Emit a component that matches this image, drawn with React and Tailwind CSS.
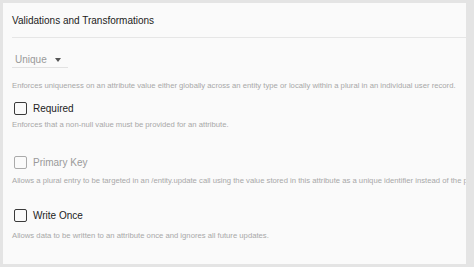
export default function App() {
    const font = { fontFamily: '"Liberation Sans", Arial, sans-serif' };
    return (
        <div className="w-[474px] h-[267px] bg-[#e4e4e4] pt-[3px] pl-[3px] pr-[8px] pb-[3px] overflow-hidden" style={font}>
            <div className="h-full bg-[#fafafa] overflow-hidden">
                {/* Header */}
                <div className="h-[35px] flex items-center ml-[9px] border-b border-[#e6e6e6]">
                    <span className="text-[10px] text-[#222]">Validations and Transformations</span>
                </div>

                <div className="pl-[9px]">
                    {/* Unique dropdown */}
                    <div className="mt-[14px] w-[56px] h-[16px] border-b border-[#e2e2e2] flex items-center pl-[3px] gap-[8px]">
                        <span className="text-[10px] text-[#999]">Unique</span>
                        <span className="w-0 h-0 border-l-[3px] border-r-[3px] border-t-[4px] border-l-transparent border-r-transparent border-t-[#555]" />
                    </div>
                    <p className="mt-[13px] text-[7.7px] leading-[9px] text-[#a8a8a8] whitespace-nowrap">
                        Enforces uniqueness on an attribute value either globally across an entity type or locally within a plural in an individual user record.
                    </p>

                    {/* Required */}
                    <div className="mt-[11px] flex items-center gap-[6px] pl-[2px]">
                        <span className="w-[13px] h-[13px] border-[1.5px] border-[#3a3a3a] rounded-[2px]" />
                        <span className="text-[10px] text-[#222]">Required</span>
                    </div>
                    <p className="mt-[4px] text-[7.7px] leading-[9px] text-[#a8a8a8] whitespace-nowrap">
                        Enforces that a non-null value must be provided for an attribute.
                    </p>

                    {/* Primary Key */}
                    <div className="mt-[26px] flex items-center gap-[6px] pl-[2px]">
                        <span className="w-[13px] h-[13px] border-[1.5px] border-[#aaa] rounded-[2px]" />
                        <span className="text-[10px] text-[#999]">Primary Key</span>
                    </div>
                    <p className="mt-[6px] text-[7.7px] leading-[9px] text-[#a8a8a8] whitespace-nowrap">
                        Allows a plural entry to be targeted in an /entity.update call using the value stored in this attribute as a unique identifier instead of the plural element id.
                    </p>

                    {/* Write Once */}
                    <div className="mt-[23px] flex items-center gap-[6px] pl-[2px]">
                        <span className="w-[13px] h-[13px] border-[1.5px] border-[#3a3a3a] rounded-[2px]" />
                        <span className="text-[10px] text-[#222]">Write Once</span>
                    </div>
                    <p className="mt-[8px] text-[7.7px] leading-[9px] text-[#a8a8a8] whitespace-nowrap">
                        Allows data to be written to an attribute once and ignores all future updates.
                    </p>
                </div>
            </div>
        </div>
    );
}
